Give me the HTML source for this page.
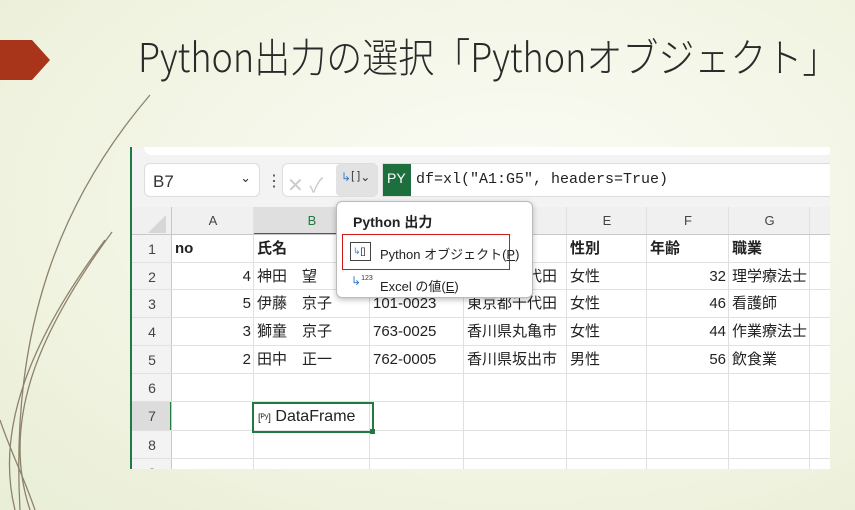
<!DOCTYPE html>
<html><head><meta charset="utf-8"><style>
*{margin:0;padding:0;box-sizing:border-box}
body{width:855px;height:510px;overflow:hidden;position:relative;background:radial-gradient(ellipse at 60% 40%,#fbfcf6 0%,#f1f4e2 60%,#e9eed6 100%);font-family:"Liberation Sans","Noto Sans CJK JP",sans-serif}
.title{position:absolute;left:138px;top:26px;font-size:40px;color:#2a2a2a;white-space:nowrap;font-family:"Noto Sans CJK JP",sans-serif;font-weight:300;transform-origin:0 0;transform:scaleX(0.9)}
.arrow{position:absolute;left:0;top:40px;width:50px;height:40px;background:#a8341a;clip-path:polygon(0 0,64% 0,100% 50%,64% 100%,0 100%)}
.xl{position:absolute;left:130px;top:147px;width:700px;height:322px;background:#f3f3f3;overflow:hidden;border-left:2px solid #1f7a44}
.cell{position:absolute;font-size:15px;color:#222;white-space:nowrap;line-height:28px}
.hl{position:absolute;background:#e1e1e1}
.g{position:absolute;background:#e4e4e4}
</style></head><body>
<div class="arrow"></div>
<div class="title">Python出力の選択「Pythonオブジェクト」</div>
<svg style="position:absolute;left:0;top:0" width="855" height="510"><g fill="none" stroke="#7d6f5a" stroke-width="1.3" opacity=".85">
<path d="M150 95 C60 200 10 330 20 510"/><path d="M112 232 C40 330 0 420 30 510"/><path d="M105 240 C30 340 -5 430 15 510"/><path d="M0 420 C10 450 25 480 35 510"/></g></svg>
<div class="xl">
<div style="position:absolute;left:12px;top:0;width:690px;height:8px;background:#fff;border-radius:0 0 8px 8px"></div>
<div style="position:absolute;left:12px;top:16px;width:116px;height:34px;background:#fff;border:1px solid #ddd;border-radius:6px;font-size:17px;color:#333;padding:8px 0 0 8px">B7<span style="position:absolute;right:8px;top:6px;font-size:13px">⌄</span></div>
<div style="position:absolute;left:134px;top:24px;font-size:16px;color:#444">⋮</div>
<div style="position:absolute;left:150px;top:16px;width:96px;height:34px;background:#fff;border:1px solid #ddd;border-radius:6px"></div>
<div style="position:absolute;left:155px;top:22px;font-size:20px;color:#ccc">✕ ✓</div>
<div style="position:absolute;left:204px;top:17px;width:42px;height:32px;background:#e2e2e2;border-radius:4px;font-size:12px;color:#3a7fc8;padding:6px 0 0 5px">↳<span style="color:#333;font-size:11px;vertical-align:top">[ ]</span><span style="color:#333">⌄</span></div>
<div style="position:absolute;left:250px;top:16px;width:452px;height:34px;background:#fff;border:1px solid #ddd"></div>
<div style="position:absolute;left:251px;top:17px;width:28px;height:32px;background:#1e6f3e;color:#fff;font-size:14px;padding:6px 0 0 4px">PY</div>
<div style="position:absolute;left:284px;top:24px;font-family:'Liberation Mono',monospace;font-size:15px;color:#222">df=xl("A1:G5", headers=True)</div>
<div style="position:absolute;left:40px;top:88px;width:662px;height:240px;background:#fff"></div>
<div class="hl" style="left:0;top:60px;width:702px;height:28px;background:#f0f0f0"></div>
<div style="position:absolute;left:122px;top:60px;width:116px;height:28px;background:#dfdfdf;border-bottom:2px solid #1f7a44"></div>
<div style="position:absolute;left:0;top:255px;width:40px;height:29px;background:#dcdcdc;border-right:2px solid #1f7a44"></div>
<div style="position:absolute;left:16px;top:68px;width:0;height:0;border-left:18px solid transparent;border-bottom:18px solid #d6d6d6"></div>
<div id="g"></div>
<div style="position:absolute;left:120px;top:255px;width:122px;height:31px;border:2px solid #1f7a44"></div>
<div style="position:absolute;left:238px;top:282px;width:5px;height:5px;background:#1f7a44"></div>
<div class="cell" style="left:126px;top:256px;font-size:16px"><span style="font-size:10px">[ᴾʸ]</span> DataFrame</div>
</div>
<div style="position:absolute;left:336px;top:201px;width:197px;height:97px;background:#fff;border:1px solid #bbb;border-radius:6px;box-shadow:0 2px 6px rgba(0,0,0,.25)">
<div style="position:absolute;left:16px;top:10px;font-weight:bold;font-size:14px;color:#222">Python 出力</div>
<div style="position:absolute;left:5px;top:32px;width:168px;height:36px;border:1.5px solid #d01818"></div>
<div style="position:absolute;left:13px;top:40px;width:21px;height:19px;border:1.5px solid #444;font-size:9px;color:#3a7fc8;padding:3px 0 0 2px">↳<span style="color:#333">[]</span></div>
<div style="position:absolute;left:43px;top:42px;font-size:13px;color:#222">Python オブジェクト(<u>P</u>)</div>
<div style="position:absolute;left:14px;top:72px;font-size:12px;color:#3a7fc8">↳<sup style="font-size:7px;color:#333">123</sup></div>
<div style="position:absolute;left:43px;top:74px;font-size:13px;color:#222">Excel の値(<u>E</u>)</div>
</div>
<script>
var X=[0,40,122,238,332,435,515,597,678,720],Y=[60,88,116,143,171,199,227,255,284,312,340];
var g=document.querySelector('.xl'),h='';
for(var i=1;i<X.length;i++)h+='<div class="g" style="left:'+(X[i]-1)+'px;top:60px;width:1px;height:280px;background:'+(i==1?'#c8c8c8':'#e0e0e0')+'"></div>';
for(var j=1;j<Y.length;j++)h+='<div class="g" style="left:0;top:'+(Y[j]-1)+'px;width:702px;height:1px;background:'+(j==1?'#c8c8c8':'#e0e0e0')+'"></div>';
var L='ABCDEFG';for(i=0;i<7;i++)h+='<div class="cell" style="left:'+X[i+1]+'px;top:'+Y[0]+'px;width:'+(X[i+2]-X[i+1])+'px;text-align:center;font-size:13px;color:#444'+(i==1?';color:#1f7a44':'')+'">'+L[i]+'</div>';
for(j=0;j<9;j++)h+='<div class="cell" style="left:0;top:'+Y[j+1]+'px;width:40px;text-align:center;font-size:14px;color:#444">'+(j+1)+'</div>';
var R=[['no','氏名','郵便','住所','性別','年齢','職業'],['4','神田　望','101-0023','東京都千代田','女性','32','理学療法士'],['5','伊藤　京子','101-0023','東京都千代田','女性','46','看護師'],['3','獅童　京子','763-0025','香川県丸亀市','女性','44','作業療法士'],['2','田中　正一','762-0005','香川県坂出市','男性','56','飲食業']];
for(j=0;j<5;j++)for(i=0;i<7;i++){var num=j>0&&(i==0||i==5);h+='<div class="cell" style="left:'+(X[i+1]+3)+'px;top:'+Y[j+1]+'px;width:'+(X[i+2]-X[i+1]-6)+'px;overflow:hidden;'+(num?'text-align:right;':'')+(j==0?'font-weight:bold;':'')+'">'+R[j][i]+'</div>';}
document.getElementById('g').outerHTML=h;
</script>
</body></html>
